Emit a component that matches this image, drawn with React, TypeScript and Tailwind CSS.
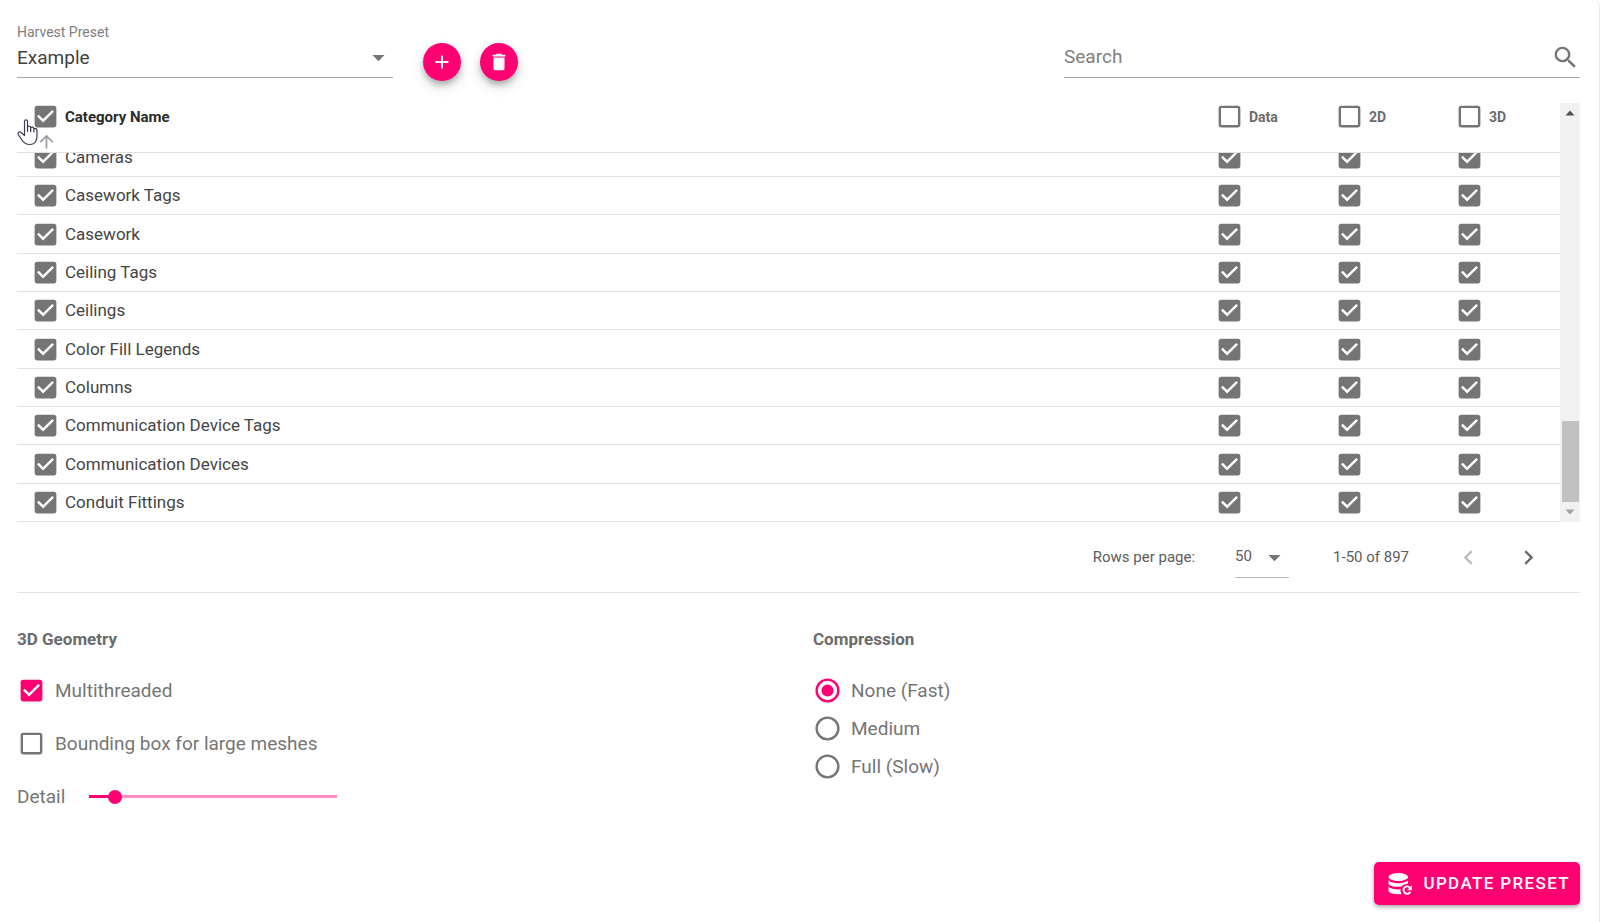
import { useState } from "react";

const ICONS = {
  checked:
    "M10,17L5,12L6.41,10.58L10,14.17L17.59,6.58L19,8M19,3H5C3.89,3 3,3.89 3,5V19A2,2 0 0,0 5,21H19A2,2 0 0,0 21,19V5C21,3.89 20.1,3 19,3Z",
  blank:
    "M19,3H5C3.89,3 3,3.89 3,5V19A2,2 0 0,0 5,21H19A2,2 0 0,0 21,19V5C21,3.89 20.1,3 19,3M19,5V19H5V5H19Z",
  radioOn:
    "M12,20A8,8 0 0,1 4,12A8,8 0 0,1 12,4A8,8 0 0,1 20,12A8,8 0 0,1 12,20M12,2A10,10 0 0,0 2,12A10,10 0 0,0 12,22A10,10 0 0,0 22,12A10,10 0 0,0 12,2M12,7A5,5 0 0,0 7,12A5,5 0 0,0 12,17A5,5 0 0,0 17,12A5,5 0 0,0 12,7Z",
  radioOff:
    "M12,20A8,8 0 0,1 4,12A8,8 0 0,1 12,4A8,8 0 0,1 20,12A8,8 0 0,1 12,20M12,2A10,10 0 0,0 2,12A10,10 0 0,0 12,22A10,10 0 0,0 22,12A10,10 0 0,0 12,2Z",
  menuDown: "M7,10L12,15L17,10H7Z",
  plus: "M19,13H13V19H11V13H5V11H11V5H13V11H19V13Z",
  trash: "M19,4H15.5L14.5,3H9.5L8.5,4H5V6H19M6,19A2,2 0 0,0 8,21H16A2,2 0 0,0 18,19V7H6V19Z",
  search:
    "M9.5,3A6.5,6.5 0 0,1 16,9.5C16,11.11 15.41,12.59 14.44,13.73L14.71,14H15.5L20.5,19L19,20.5L14,15.5V14.71L13.73,14.44C12.59,15.41 11.11,16 9.5,16A6.5,6.5 0 0,1 3,9.5A6.5,6.5 0 0,1 9.5,3M9.5,5C7,5 5,7 5,9.5C5,12 7,14 9.5,14C12,14 14,12 14,9.5C14,7 12,5 9.5,5Z",
  arrowUp: "M13,20H11V8L5.5,13.5L4.08,12.08L12,4.16L19.92,12.08L18.5,13.5L13,8V20Z",
  left: "M15.41,16.58L10.83,12L15.41,7.41L14,6L8,12L14,18L15.41,16.58Z",
  right: "M8.59,16.58L13.17,12L8.59,7.41L10,6L16,12L10,18L8.59,16.58Z",
};

function Icon({ name, className }: { name: keyof typeof ICONS; className: string }) {
  return (
    <svg viewBox="0 0 24 24" className={className} fill="currentColor" aria-hidden="true">
      <path d={ICONS[name]} />
    </svg>
  );
}

type ToggleProps = {
  id: string;
  type?: "checkbox" | "radio";
  name?: string;
  checked?: boolean;
  pink?: boolean;
  label?: string;
};

function Toggle({ id, type = "checkbox", name, checked, pink, label }: ToggleProps) {
  const radio = type === "radio";
  return (
    <span className="relative block size-[29px] shrink-0 text-[#757575]">
      <input
        id={id}
        type={type}
        name={name}
        defaultChecked={checked}
        aria-label={label}
        className="peer absolute inset-0 z-10 size-full cursor-pointer opacity-0"
      />
      <Icon name={radio ? "radioOff" : "blank"} className="block size-[29px] peer-checked:hidden" />
      <Icon
        name={radio ? "radioOn" : "checked"}
        className={
          pink ? "hidden size-[29px] text-[#ff0073] peer-checked:block" : "hidden size-[29px] peer-checked:block"
        }
      />
    </span>
  );
}

const CATEGORIES = [
  "Cameras",
  "Casework Tags",
  "Casework",
  "Ceiling Tags",
  "Ceilings",
  "Color Fill Legends",
  "Columns",
  "Communication Device Tags",
  "Communication Devices",
  "Conduit Fittings",
];
const OUTPUTS = ["Data", "2D", "3D"];

function CategoryTable() {
  return (
    <div className="mt-6 flex">
      <table className="grow table-fixed border-separate border-spacing-0 text-left">
        <thead>
          <tr className="h-[51px]">
            <th scope="col" className="border-b border-[#e0e0e0] p-0 pl-3.5 align-top">
              <div className="flex items-center gap-[5px]">
                <Toggle id="all" checked />
                <label htmlFor="all" className="text-[15px] leading-5 font-bold text-[#2b2b2b]">
                  Category Name
                </label>
              </div>
              <button type="button" aria-label="Sort by category name" className="ml-[5px] block text-[#9e9e9e]">
                <Icon name="arrowUp" className="block size-[21px]" />
              </button>
            </th>
            {OUTPUTS.map((o) => (
              <th key={o} scope="col" className="w-[120px] border-b border-[#e0e0e0] p-0 pl-[15px] align-top">
                <div className="flex items-center gap-[5px]">
                  <Toggle id={`all-${o}`} />
                  <label htmlFor={`all-${o}`} className="text-sm leading-5 font-bold text-[#6b6b6b]">
                    {o}
                  </label>
                </div>
              </th>
            ))}
          </tr>
        </thead>
        <tbody>
          {CATEGORIES.map((c, i) => {
            const row = i === 0 ? "h-6" : "h-[38px] nth-[3n]:h-[39px]";
            const cell =
              i === 0
                ? "flex h-[23px] items-end gap-[5px] overflow-hidden pb-1"
                : "flex h-[37px] items-center gap-[5px]";
            return (
              <tr key={c} className={row}>
                <td className="border-b border-[#e4e4e4] p-0 pl-3.5">
                  <div className={cell}>
                    <Toggle id={`row-${i}`} checked />
                    <label htmlFor={`row-${i}`} className="text-[17px] leading-[29px] text-[#454545]">
                      {c}
                    </label>
                  </div>
                </td>
                {OUTPUTS.map((o) => (
                  <td key={o} className="border-b border-[#e4e4e4] p-0 pl-[15px]">
                    <div className={cell}>
                      <Toggle id={`row-${i}-${o}`} checked label={`${c} ${o}`} />
                    </div>
                  </td>
                ))}
              </tr>
            );
          })}
        </tbody>
      </table>
      <div className="mt-px flex w-5 flex-col items-center bg-[#f1f1f1]">
        <svg viewBox="0 0 20 20" className="size-5" aria-hidden="true">
          <path d="M10 7.5 14.5 12.5H5.5Z" fill="#505050" />
        </svg>
        <div className="grow" />
        <div className="h-[81px] w-[17px] bg-[#c1c1c1]" />
        <svg viewBox="0 0 20 20" className="size-5" aria-hidden="true">
          <path d="M5.5 7.5H14.5L10 12.5Z" fill="#a3a3a3" />
        </svg>
      </div>
    </div>
  );
}

function DetailSlider() {
  const [value, setValue] = useState(8);
  const stop = `calc(7px + (100% - 14px) * ${value / 100})`;
  return (
    <div className="flex items-center">
      <label htmlFor="detail" className="w-[72px] leading-[29px]">
        Detail
      </label>
      <input
        id="detail"
        type="range"
        min={0}
        max={100}
        value={value}
        onChange={(e) => setValue(Number(e.target.value))}
        style={{ backgroundImage: `linear-gradient(to right, #ff0073 ${stop}, #ff8cc2 ${stop})` }}
        className="h-[3px] w-[248px] cursor-pointer appearance-none [&::-webkit-slider-thumb]:size-3.5 [&::-webkit-slider-thumb]:appearance-none [&::-webkit-slider-thumb]:rounded-full [&::-webkit-slider-thumb]:bg-[#ff0073]"
      />
    </div>
  );
}

const FAB =
  "flex size-[38px] items-center justify-center rounded-full bg-[#ff0073] text-white shadow-[0_4px_6px_-1px_rgba(0,0,0,0.28),0_6px_14px_rgba(0,0,0,0.14)]";

export default function App() {
  return (
    <main className="relative min-h-screen rounded-t-lg border-r border-[#e8e8e8] bg-white pt-6 pr-[19px] pb-4 pl-[17px] font-['Roboto',sans-serif] text-[#757575]">
      <header className="flex h-[54px] items-start justify-between">
        <div className="flex">
          <div className="h-[54px] w-[376px] border-b border-[#a8a8a8]">
            <label htmlFor="preset" className="block text-sm leading-[17px] text-[#808080]">
              Harvest Preset
            </label>
            <div className="relative flex text-[#404040]">
              <select id="preset" className="h-[34px] w-full appearance-none bg-transparent text-[19px] outline-none">
                <option>Example</option>
              </select>
              <Icon name="menuDown" className="pointer-events-none absolute top-0.5 right-0 size-[29px] text-[#757575]" />
            </div>
          </div>
          <div className="ml-[30px] flex gap-[19px] pt-[19px]">
            <button type="button" aria-label="Add preset" className={FAB}>
              <Icon name="plus" className="size-[22px]" />
            </button>
            <button type="button" aria-label="Delete preset" className={FAB}>
              <Icon name="trash" className="size-[22px]" />
            </button>
          </div>
        </div>
        <div className="flex h-[54px] w-[516px] items-start border-b border-[#a8a8a8] pt-3">
          <input
            type="search"
            aria-label="Search"
            placeholder="Search"
            className="h-[41px] grow text-[19px] outline-none placeholder:text-[#808080]"
          />
          <Icon name="search" className="mt-[7px] size-[29px] text-[#757575]" />
        </div>
      </header>

      <CategoryTable />

      <div className="flex h-[71px] items-center justify-end border-b border-[#e4e4e4] text-[15px] text-[#5c5c5c]">
        <label htmlFor="rows">Rows per page:</label>
        <div className="relative mt-1 ml-10 w-[54px] border-b border-[#b8b8b8]">
          <select id="rows" className="block h-[37px] w-full appearance-none bg-transparent pb-1 outline-none">
            <option>50</option>
          </select>
          <Icon name="menuDown" className="pointer-events-none absolute top-[3px] right-0 size-[29px] text-[#757575]" />
        </div>
        <span className="ml-11">1-50 of 897</span>
        <div className="mr-[37px] ml-[45px] flex gap-[31px]">
          <button type="button" aria-label="Previous page" disabled className="text-[#bdbdbd]">
            <Icon name="left" className="size-[29px]" />
          </button>
          <button type="button" aria-label="Next page" className="text-[#6b6b6b]">
            <Icon name="right" className="size-[29px]" />
          </button>
        </div>
      </div>

      <div className="grid grid-cols-2 gap-x-[29px] pt-[34px]">
        <section>
          <h2 className="text-[17px] leading-6 font-bold text-[#6b6b6b]">3D Geometry</h2>
          <div className="mt-[25px] flex flex-col gap-6 text-[19px]">
            <div className="flex items-center gap-[9px]">
              <Toggle id="multithreaded" checked pink />
              <label htmlFor="multithreaded" className="leading-[29px]">
                Multithreaded
              </label>
            </div>
            <div className="flex items-center gap-[9px]">
              <Toggle id="bounding" pink />
              <label htmlFor="bounding" className="leading-[29px]">
                Bounding box for large meshes
              </label>
            </div>
            <DetailSlider />
          </div>
        </section>
        <section>
          <h2 className="text-[17px] leading-6 font-bold text-[#6b6b6b]">Compression</h2>
          <div className="mt-[25px] flex flex-col gap-[9px] text-[19px]">
            {["None (Fast)", "Medium", "Full (Slow)"].map((c, i) => (
              <div key={c} className="flex items-center gap-[9px]">
                <Toggle id={`compression-${i}`} type="radio" name="compression" checked={i === 0} pink />
                <label htmlFor={`compression-${i}`} className="leading-[29px]">
                  {c}
                </label>
              </div>
            ))}
          </div>
        </section>
      </div>

      <div className="mt-[51px] flex justify-end">
        <button
          type="button"
          className="flex h-[43px] items-center gap-[11px] rounded-[5px] bg-[#ff0073] pr-2.5 pl-3.5 text-[17px] font-medium tracking-[0.08em] text-white shadow-[0_2px_4px_rgba(0,0,0,0.35)]"
        >
          <svg viewBox="0 0 24 24" className="size-6" fill="currentColor" aria-hidden="true">
            <ellipse cx="10.3" cy="5" rx="9.8" ry="4" />
            <path d="M.5 8.300C2.500 10.600 6.500 11.300 10.300 11.300S18 10.600 20 8.300V11.800C17 11.900 15 12.800 13.600 14.600C8.500 15.300 2.500 14.600 .5 12Z" />
            <path d="M.5 14.800C3 17 8 17.700 12.600 17.300C12.300 19 12.600 20.500 13.400 21.900C8.500 22.600 2 21.800 .5 19Z" />
            <path d="M22 15.700A3.700 3.700 0 1 0 22.400 19.900" fill="none" stroke="currentColor" strokeWidth="1.900" />
            <path d="M23.900 13.300V18.200H19Z" />
          </svg>
          UPDATE PRESET
        </button>
      </div>

      <svg
        viewBox="0 0 22 27"
        className="pointer-events-none absolute top-[119px] left-[17px] z-20 h-[27px] w-[22px]"
        fill="#fff"
        stroke="#3a3a50"
        strokeWidth="1.2"
        strokeLinejoin="round"
        strokeLinecap="round"
        aria-hidden="true"
      >
        <path d="M7.500 15V2.500C7.500 .3 10.500 .3 10.500 2.500V8C11 6.800 13.500 7 13.700 8.600C14.500 7.700 16.700 8 16.900 9.700C18.200 8.900 20 9.700 20 11.500V17C20 22.500 17 25.500 12.800 25.500C8.500 25.500 6.500 23.500 4.500 20.500L1.300 15.500C.3 13.500 2.500 12 4.200 13.500L7.500 16.500Z" />
        <path d="M10.500 8V12.500M13.700 8.600V12.700M16.900 9.700V13" fill="none" />
      </svg>
    </main>
  );
}
